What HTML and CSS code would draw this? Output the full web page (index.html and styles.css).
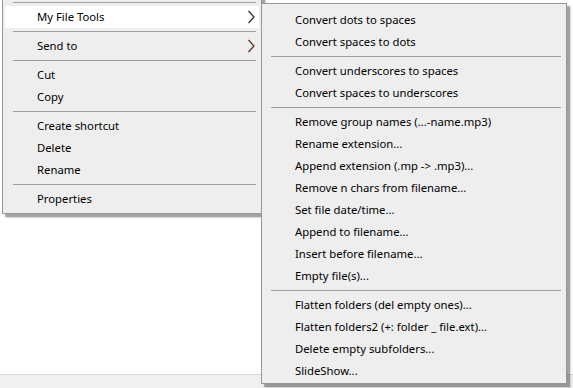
FILE: index.html
```html
<!DOCTYPE html>
<html>
<head>
<meta charset="utf-8">
<link rel="stylesheet" href="styles.css">
</head>
<body>
<div class="screen">
  <div class="workspace"></div>
  <div class="statusbar"></div>

  <div class="menu main-menu">
    <div class="sep"></div>
    <div class="item hl"><span>My File Tools</span>
      <svg class="arrow" width="8" height="14" viewBox="0 0 8 14"><path d="M1.5 1 L7 7 L1.5 13" fill="none" stroke="#2a2a2a" stroke-width="1.2"/></svg>
    </div>
    <div class="sep"></div>
    <div class="item"><span>Send to</span>
      <svg class="arrow" width="8" height="14" viewBox="0 0 8 14"><path d="M1.5 1 L7 7 L1.5 13" fill="none" stroke="#5a2a20" stroke-width="1.2"/></svg>
    </div>
    <div class="sep"></div>
    <div class="item">Cut</div>
    <div class="item">Copy</div>
    <div class="sep"></div>
    <div class="item">Create shortcut</div>
    <div class="item">Delete</div>
    <div class="item">Rename</div>
    <div class="sep"></div>
    <div class="item">Properties</div>
  </div>

  <div class="menu sub-menu">
    <div class="item">Convert dots to spaces</div>
    <div class="item">Convert spaces to dots</div>
    <div class="sep"></div>
    <div class="item">Convert underscores to spaces</div>
    <div class="item">Convert spaces to underscores</div>
    <div class="sep"></div>
    <div class="item">Remove group names (...-name.mp3)</div>
    <div class="item">Rename extension...</div>
    <div class="item">Append extension (.mp -&gt; .mp3)...</div>
    <div class="item">Remove n chars from filename...</div>
    <div class="item">Set file date/time...</div>
    <div class="item">Append to filename...</div>
    <div class="item">Insert before filename...</div>
    <div class="item">Empty file(s)...</div>
    <div class="sep"></div>
    <div class="item">Flatten folders (del empty ones)...</div>
    <div class="item">Flatten folders2 (+: folder _ file.ext)...</div>
    <div class="item">Delete empty subfolders...</div>
    <div class="item">SlideShow...</div>
  </div>
</div>
</body>
</html>
```

FILE: styles.css
```css
html, body {
  margin: 0;
  padding: 0;
  background: #ffffff;
}

.screen {
  position: relative;
  width: 573px;
  height: 388px;
  overflow: hidden;
  display: flex;
  flex-direction: column;
  font-family: "Noto Sans", "Open Sans", sans-serif;
  font-size: 11.3px;
  color: #000000;
}

.workspace {
  flex: 1;
  background: #ffffff;
}

.statusbar {
  height: 13px;
  background: #f0f0f0;
  border-top: 1px solid #d9d9d9;
}

.menu {
  position: absolute;
  box-sizing: border-box;
  background: #eeeeee;
  border: 1px solid #979797;
  box-shadow: 3px 3px 1px rgba(0, 0, 0, 0.28), 4px 4px 2px rgba(0, 0, 0, 0.12);
}

.main-menu {
  left: 2px;
  top: -5px;
  width: 260px;
  padding: 3px 2px;
  z-index: 1;
}

.sub-menu {
  left: 261px;
  top: 3px;
  width: 306px;
  padding: 5px 2px 1px 2px;
  z-index: 2;
}

.item {
  height: 22px;
  line-height: 22px;
  display: flex;
  align-items: center;
  justify-content: space-between;
  white-space: nowrap;
}

.main-menu .item {
  padding: 0 4px 0 32px;
}

.sub-menu .item {
  padding: 0 4px 0 31px;
}

.item.hl {
  background: #ffffff;
}

.sep {
  height: 1px;
  background: #a0a0a0;
  margin: 3px 3px 3px 8px;
}

.sub-menu .sep {
  margin: 3px 3px 3px 7px;
}

.arrow {
  display: block;
  flex: none;
}
```
